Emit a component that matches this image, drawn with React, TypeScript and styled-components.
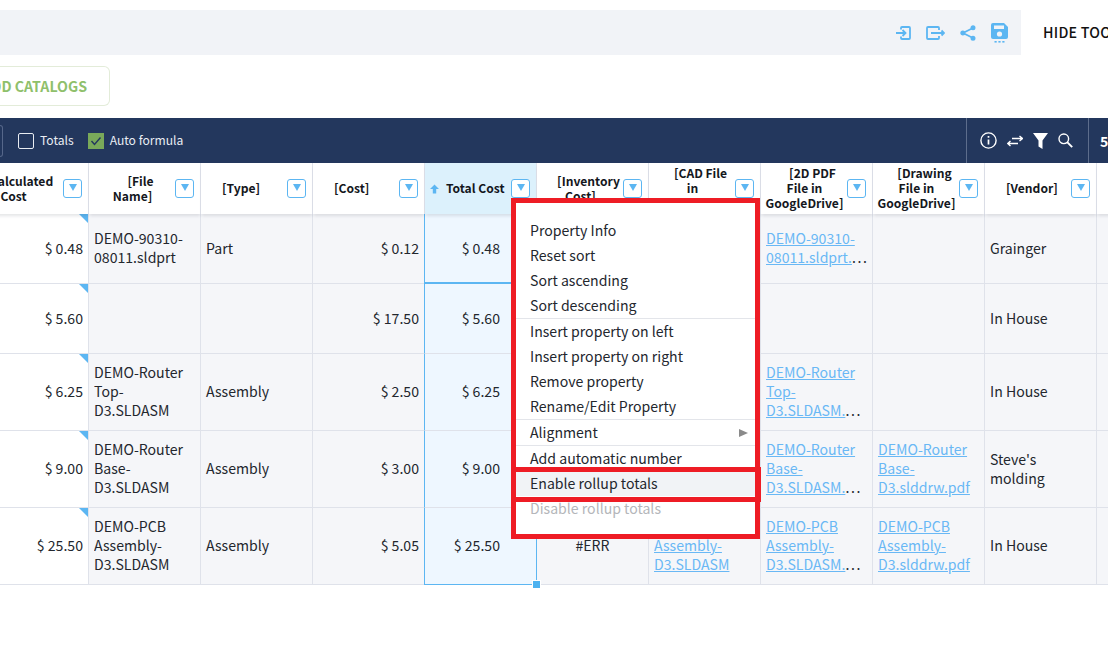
import React from "react";
import styled, { createGlobalStyle } from "styled-components";

const Global = createGlobalStyle`
  html, body { margin: 0; padding: 0; background: #fff; }
  body { font-family: "Noto Sans CJK JP", "Noto Sans", sans-serif; color: #1a1f29; overflow: hidden; }
  #root { width: 1108px; height: 667px; overflow: hidden; position: relative; }
`;

const Page = styled.div`
  display: flex;
  flex-direction: column;
  width: 1108px;
  height: 667px;
  padding-top: 10px;
  box-sizing: border-box;
  position: relative;
`;

const TopRow = styled.div`
  display: flex;
  height: 45px;
`;
const TopBar = styled.div`
  width: 1021px;
  background: #f1f3f7;
  display: flex;
  align-items: center;
  justify-content: flex-end;
  padding-right: 13px;
  box-sizing: border-box;
  gap: 15px;
`;
const HideTab = styled.div`
  flex: 1;
  white-space: nowrap;
  overflow: hidden;
  font-size: 14.2px;
  line-height: 45px;
  font-weight: 500;
  letter-spacing: 0.25px;
  color: #111;
  padding-left: 22px;
`;
const ActionRow = styled.div`
  height: 40px;
  margin-top: 11px;
  display: flex;
`;
const CatalogButton = styled.div`
  width: 110px;
  height: 40px;
  box-sizing: border-box;
  border: 1px solid #e3ecd9;
  border-left: 0;
  border-radius: 0 6px 6px 0;
  display: flex;
  align-items: center;
  justify-content: flex-end;
  padding-right: 22px;
  font-size: 14.2px;
  font-weight: 700;
  color: #8fc06b;
  white-space: nowrap;
  overflow: hidden;
`;
const Toolbar = styled.div`
  margin-top: 12px;
  height: 45px;
  background: #23375d;
  display: flex;
  align-items: center;
  color: #fff;
  font-size: 12.1px;
`;
const LeftStub = styled.div`
  width: 3px;
  height: 32px;
  box-sizing: border-box;
  border: 1px solid #56678a;
  border-left: 0;
  border-radius: 0 4px 4px 0;
`;
const Check = styled.span<{ $on?: boolean }>`
  width: 16px;
  height: 16px;
  box-sizing: border-box;
  display: flex;
  align-items: center;
  justify-content: center;
  border-radius: ${(p) => (p.$on ? "0" : "2px")};
  border: ${(p) => (p.$on ? "0" : "1.5px solid #e8ecf2")};
  background: ${(p) => (p.$on ? "#79a95a" : "transparent")};
`;
const CheckLabel = styled.label<{ $first?: boolean }>`
  display: flex;
  align-items: center;
  gap: 6px;
  margin-left: ${(p) => (p.$first ? "15px" : "14px")};
  color: #e9edf3;
`;
const LabelText = styled.span`
  line-height: 19px;
  padding-bottom: 2px;
`;
const ToolRight = styled.div`
  margin-left: auto;
  display: flex;
  height: 45px;
  align-items: center;
`;
const IconGroup = styled.div`
  width: 123px;
  height: 45px;
  box-sizing: border-box;
  border-left: 1px solid #5d6d8c;
  border-right: 1px solid #5d6d8c;
  display: flex;
  align-items: center;
  padding-left: 13px;
  gap: 10px;
`;
const PageCount = styled.div`
  width: 19px;
  padding-left: 11px;
  box-sizing: border-box;
  font-weight: 700;
  font-size: 14px;
  white-space: nowrap;
  overflow: hidden;
`;

const Viewport = styled.div`
  overflow: hidden;
  width: 1108px;
  padding-bottom: 8px;
`;
const Table = styled.div`
  display: grid;
  grid-template-columns: 126px repeat(10, 112px);
  grid-template-rows: 51px 70px 70px 77px 77px 77px;
  margin-left: -37px;
  width: 1246px;
`;
const HeadCell = styled.div<{ $active?: boolean }>`
  box-sizing: border-box;
  border-right: 1px solid #dfe2ea;
  background: ${(p) => (p.$active ? "#dcf1fc" : "#fff")};
  box-shadow: 0 3px 3px -1px rgba(30, 40, 60, 0.12);
  display: flex;
  align-items: center;
  padding: 0 6px 0 1px;
  font-size: 12.1px;
  font-weight: 700;
  line-height: 15px;
  color: #14171d;
  position: relative;
  z-index: 1;
`;
const HeadText = styled.div<{ $single?: boolean }>`
  flex: 1;
  min-width: 0;
  text-align: ${(p) => (p.$single ? "left" : "center")};
  padding-left: ${(p) => (p.$single ? "4px" : "0")};
  padding-bottom: 2px;
  white-space: nowrap;
`;
const SortSlot = styled.span`
  display: inline-flex;
  width: 16px;
  height: 10px;
  vertical-align: -1px;
`;
const DropButton = styled.span`
  flex: none;
  width: 19px;
  height: 19px;
  box-sizing: border-box;
  border: 1px solid #5cb6f2;
  border-radius: 3px;
  background: #fff;
  display: flex;
  align-items: center;
  justify-content: center;
`;
const Tri = styled.i`
  width: 0;
  height: 0;
  border-left: 4px solid transparent;
  border-right: 4px solid transparent;
  border-top: 7px solid #5cb6f2;
  margin-bottom: 2px;
`;
const Cell = styled.div<{ $align?: string; $active?: boolean; $sel?: boolean; $lastSel?: boolean; $plain?: boolean }>`
  box-sizing: border-box;
  border-right: 1px solid #dfe2ea;
  border-bottom: 1px solid #dfe2ea;
  background: ${(p) => (p.$active ? "#eef7ff" : p.$plain ? "#fff" : "#f5f6f9")};
  display: flex;
  align-items: center;
  justify-content: ${(p) => (p.$align === "right" ? "flex-end" : p.$align === "center" ? "center" : "flex-start")};
  padding: 0 5px 1px 5px;
  font-size: 14.1px;
  line-height: 19px;
  color: #23272e;
  position: relative;
  ${(p) => p.$active && "border-left: 1px solid #5cb6f2; border-right: 1px solid #5cb6f2; margin-left: -1px; padding-right: 36px; justify-content: flex-end;"}
  ${(p) => p.$sel && "border-bottom: 2px solid #5cb6f2; padding-bottom: 0;"}
  ${(p) => p.$lastSel && "border-bottom: 1px solid #5cb6f2;"}
`;
const CellBody = styled.div`
  width: 100%;
  overflow: hidden;
`;
const LinkLine = styled.div`
  white-space: nowrap;
`;
const Link = styled.a`
  color: #69b8f5;
  text-decoration: underline;
`;
const Dots = styled.span`
  color: #23272e;
  letter-spacing: 1.6px;
`;
const Corner = styled.span`
  position: absolute;
  right: 0;
  top: 0;
  width: 0;
  height: 0;
  border-top: 9px solid #5cb6f2;
  border-left: 9px solid transparent;
`;
const Handle = styled.span`
  position: absolute;
  right: -5px;
  bottom: -5px;
  width: 7px;
  height: 7px;
  background: #4db2f0;
  border: 1px solid #fff;
  z-index: 2;
`;

const Menu = styled.div`
  position: absolute;
  left: 511px;
  top: 198px;
  width: 249px;
  height: 341px;
  box-sizing: border-box;
  border: 5px solid #ee1c25;
  background: #fff;
  padding: 15px 0 0;
  z-index: 5;
`;
const Item = styled.div<{ $hover?: boolean; $disabled?: boolean }>`
  height: 25px;
  line-height: 25px;
  padding-left: 14px;
  font-size: 14.1px;
  color: ${(p) => (p.$disabled ? "#b4b6ba" : "#23272e")};
  background: ${(p) => (p.$hover ? "#f1f3f6" : "transparent")};
  display: flex;
  align-items: center;
  justify-content: space-between;
`;
const Sep = styled.div`
  height: 1px;
  background: #e3e5ea;
`;
const SubArrow = styled.i`
  width: 0;
  height: 0;
  border-top: 4px solid transparent;
  border-bottom: 4px solid transparent;
  border-left: 9px solid #8a8a8a;
  margin-right: 7px;
`;
const HighlightBox = styled.div`
  position: absolute;
  left: 511px;
  top: 467px;
  width: 250px;
  height: 35px;
  box-sizing: border-box;
  border: 5px solid #ee1c25;
  z-index: 6;
  pointer-events: none;
`;

type Row = {
  calc: string;
  file: string[];
  type: string;
  cost: string;
  total: string;
  inv?: string;
  cad?: string[];
  pdf?: string[];
  dwg?: string[];
  vendor: string[];
};

const rows: Row[] = [
  { calc: "$ 0.48", file: ["DEMO-90310-", "08011.sldprt"], type: "Part", cost: "$ 0.12", total: "$ 0.48", pdf: ["DEMO-90310-", "08011.sldprt."], vendor: ["Grainger"] },
  { calc: "$ 5.60", file: [], type: "", cost: "$ 17.50", total: "$ 5.60", vendor: ["In House"] },
  { calc: "$ 6.25", file: ["DEMO-Router", "Top-", "D3.SLDASM"], type: "Assembly", cost: "$ 2.50", total: "$ 6.25", pdf: ["DEMO-Router", "Top-", "D3.SLDASM."], vendor: ["In House"] },
  { calc: "$ 9.00", file: ["DEMO-Router", "Base-", "D3.SLDASM"], type: "Assembly", cost: "$ 3.00", total: "$ 9.00", pdf: ["DEMO-Router", "Base-", "D3.SLDASM."], dwg: ["DEMO-Router", "Base-", "D3.slddrw.pdf"], vendor: ["Steve's", "molding"] },
  { calc: "$ 25.50", file: ["DEMO-PCB", "Assembly-", "D3.SLDASM"], type: "Assembly", cost: "$ 5.05", total: "$ 25.50", inv: "#ERR", cad: ["DEMO-PCB", "Assembly-", "D3.SLDASM"], pdf: ["DEMO-PCB", "Assembly-", "D3.SLDASM."], dwg: ["DEMO-PCB", "Assembly-", "D3.slddrw.pdf"], vendor: ["In House"] },
];

const heads: string[][] = [
  ["Calculated", "Cost"],
  ["[File", "Name]"],
  ["[Type]"],
  ["[Cost]"],
  ["Total Cost"],
  ["[Inventory", "Cost]"],
  ["[CAD File", "in", "GoogleDrive]"],
  ["[2D PDF", "File in", "GoogleDrive]"],
  ["[Drawing", "File in", "GoogleDrive]"],
  ["[Vendor]"],
  [],
];

const SortUp = () => (
  <svg width="9" height="10" viewBox="0 0 9 10" fill="#5cb6f2">
    <path d="M4.5 0.5 9 5H6.2v4.5H2.8V5H0Z" />
  </svg>
);

const Lines = ({ lines }: { lines: string[] }) => (
  <CellBody>
    {lines.map((l) => (
      <LinkLine key={l}>{l}</LinkLine>
    ))}
  </CellBody>
);

const LinkLines = ({ lines, dots }: { lines?: string[]; dots?: boolean }) => (
  <CellBody>
    {lines?.map((l, i) => (
      <LinkLine key={i}>
        <Link>{l}</Link>
        {dots && i === lines.length - 1 ? <Dots>...</Dots> : null}
      </LinkLine>
    ))}
  </CellBody>
);

export default function App() {
  return (
    <Page>
      <Global />
      <TopRow>
        <TopBar>
          <svg width="15" height="14" viewBox="0 0 15 14" fill="none" stroke="#5cb6f2" strokeWidth="1.8">
            <path d="M5 3.5V2a1 1 0 0 1 1-1h7a1 1 0 0 1 1 1v10a1 1 0 0 1-1 1H6a1 1 0 0 1-1-1v-1.5" />
            <path d="M0 7h9.5M6.5 4l3 3-3 3" />
          </svg>
          <svg width="19" height="14" viewBox="0 0 19 14" fill="none" stroke="#5cb6f2" strokeWidth="1.8">
            <path d="M13 4V2a1 1 0 0 0-1-1H2a1 1 0 0 0-1 1v10a1 1 0 0 0 1 1h10a1 1 0 0 0 1-1v-2" />
            <path d="M5 7h13M15.5 4.5 18 7l-2.5 2.5" />
          </svg>
          <svg width="16" height="16" viewBox="0 0 16 16" fill="#5cb6f2" stroke="#5cb6f2" strokeWidth="1.8">
            <path d="M13 3 3 8l10 5" fill="none" />
            <circle cx="13" cy="2.8" r="1.6" />
            <circle cx="2.8" cy="8" r="1.6" />
            <circle cx="13" cy="13.2" r="1.6" />
          </svg>
          <svg width="17" height="20" viewBox="0 0 17 20" fill="#5cb6f2">
            <path d="M2 0h11l4 4v10a2 2 0 0 1-2 2H2a2 2 0 0 1-2-2V2a2 2 0 0 1 2-2Z" />
            <rect x="3" y="2.5" width="10" height="3.5" fill="#f1f3f7" />
            <circle cx="8.5" cy="11" r="2.6" fill="#f1f3f7" />
            <rect x="3.5" y="18" width="2.2" height="1.6" />
            <rect x="7.4" y="18" width="2.2" height="1.6" />
            <rect x="11.3" y="18" width="2.2" height="1.6" />
          </svg>
        </TopBar>
        <HideTab>HIDE TOOLBAR</HideTab>
      </TopRow>
      <ActionRow>
        <CatalogButton>ADD CATALOGS</CatalogButton>
      </ActionRow>
      <Toolbar>
        <LeftStub />
        <CheckLabel $first>
          <Check />
          <LabelText>Totals</LabelText>
        </CheckLabel>
        <CheckLabel>
          <Check $on>
            <svg width="14" height="12" viewBox="0 0 14 12" fill="none" stroke="#23375d" strokeWidth="1.4">
              <path d="M2.5 6l3 3.5L11.5 2.5" />
            </svg>
          </Check>
          <LabelText>Auto formula</LabelText>
        </CheckLabel>
        <ToolRight>
          <IconGroup>
            <svg width="17" height="17" viewBox="0 0 17 17" fill="none" stroke="#fff" strokeWidth="1.4">
              <circle cx="8.5" cy="8.5" r="7.6" />
              <path d="M8.5 7.4v5.2M8.5 4v1.8" strokeWidth="1.7" />
            </svg>
            <svg width="16" height="12" viewBox="0 0 16 12" fill="none" stroke="#fff" strokeWidth="1.4">
              <path d="M5 3.5h10M12.5 1 15.5 3.5 12.5 6" />
              <path d="M11 8.5H0.8M3.5 6 0.8 8.5 3.5 11" />
            </svg>
            <svg width="15" height="16" viewBox="0 0 15 16" fill="#fff">
              <path d="M0 0h15L9.5 7.5V16L5.5 13.5V7.5Z" />
            </svg>
            <svg width="15" height="15" viewBox="0 0 15 15" fill="none" stroke="#fff" strokeWidth="1.4">
              <circle cx="5.8" cy="5.8" r="4.8" />
              <path d="M9.2 9.2 14.2 14.2" strokeWidth="1.9" />
            </svg>
          </IconGroup>
          <PageCount>50</PageCount>
        </ToolRight>
      </Toolbar>
      <Viewport>
        <Table>
          {heads.map((h, i) => (
            <HeadCell key={i} $active={i === 4}>
              <HeadText $single={h.length === 1}>
                {h.map((line, li) => (
                  <div key={li}>
                    {li === 0 && <SortSlot>{i === 4 && <SortUp />}</SortSlot>}
                    {line}
                  </div>
                ))}
              </HeadText>
              {h.length > 0 && (
                <DropButton>
                  <Tri />
                </DropButton>
              )}
            </HeadCell>
          ))}
          {rows.map((r, ri) => (
            <React.Fragment key={ri}>
              <Cell $align="right" $plain>
                {r.calc}
                <Corner />
              </Cell>
              <Cell>
                <Lines lines={r.file} />
              </Cell>
              <Cell>{r.type}</Cell>
              <Cell $align="right">{r.cost}</Cell>
              <Cell $active $sel={ri === 0} $lastSel={ri === 4}>
                {r.total}
                {ri === 4 && <Handle />}
              </Cell>
              <Cell $align="center">{r.inv}</Cell>
              <Cell>
                <LinkLines lines={r.cad} />
              </Cell>
              <Cell>
                <LinkLines lines={r.pdf} dots />
              </Cell>
              <Cell>
                <LinkLines lines={r.dwg} />
              </Cell>
              <Cell>
                <Lines lines={r.vendor} />
              </Cell>
              <Cell />
            </React.Fragment>
          ))}
        </Table>
      </Viewport>
      <Menu>
        <Item>Property Info</Item>
        <Item>Reset sort</Item>
        <Item>Sort ascending</Item>
        <Item>Sort descending</Item>
        <Sep />
        <Item>Insert property on left</Item>
        <Item>Insert property on right</Item>
        <Item>Remove property</Item>
        <Item>Rename/Edit Property</Item>
        <Sep />
        <Item>
          Alignment
          <SubArrow />
        </Item>
        <Sep />
        <Item>Add automatic number</Item>
        <Item $hover>Enable rollup totals</Item>
        <Item $disabled>Disable rollup totals</Item>
      </Menu>
      <HighlightBox />
    </Page>
  );
}
